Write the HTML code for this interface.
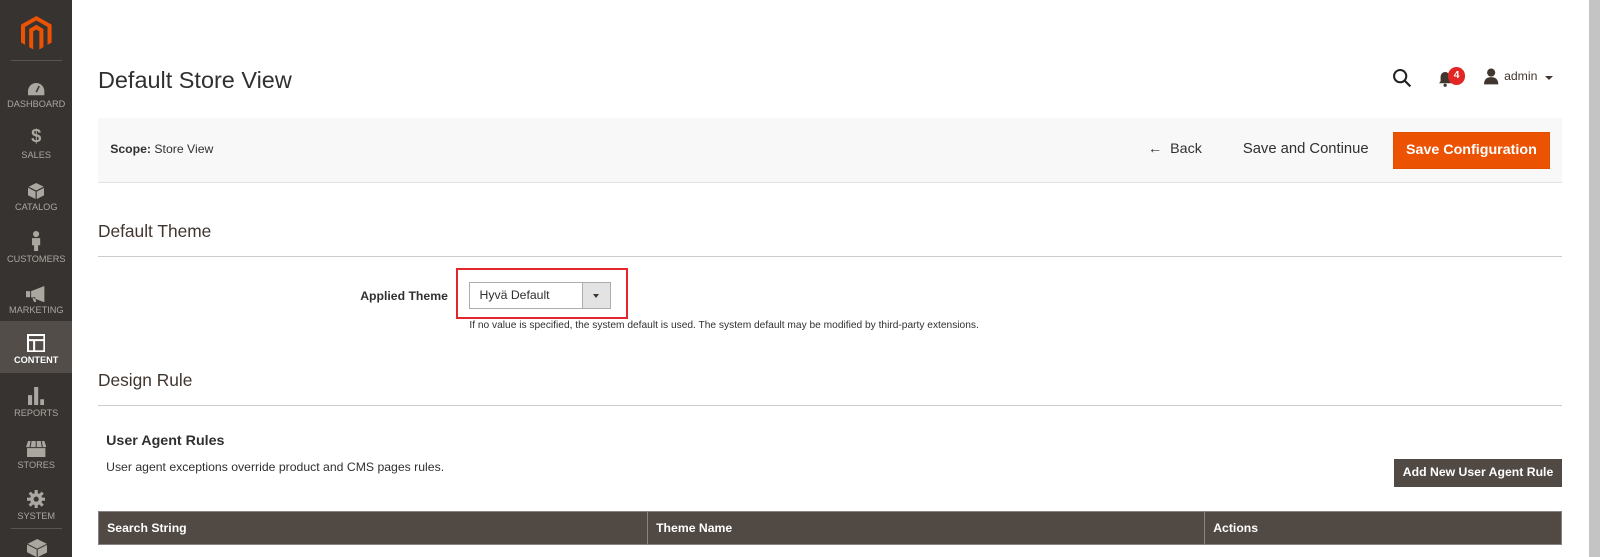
<!DOCTYPE html>
<html><head><meta charset="utf-8"><style>
*{box-sizing:border-box;margin:0;padding:0}
body{width:1600px;height:557px;overflow:hidden;background:#fff;font-family:"Liberation Sans",sans-serif;color:#303030;position:relative}
#w{position:absolute;left:0;top:0;width:1568px;height:546px;zoom:1.0204}
.side{position:absolute;left:0;top:0;width:71px;height:546px;background:#373330}
.sep{position:absolute;left:11px;width:50px;height:1px;background:#5a5551}
.it{position:absolute;left:0;width:71px;height:51px;text-align:center;color:#aaa6a0;font-size:9px}
.it .ic{height:22px;display:flex;align-items:flex-end;justify-content:center;margin-top:8px;margin-bottom:3px}
.it.act{background:#524d49;color:#fff;font-weight:bold}
.abs{position:absolute}
</style></head><body>
<div id="w">
<div class="side">
 <svg class="abs" style="left:21px;top:16px" width="30" height="34" viewBox="0 0 30 34"><path d="M15 0L30 8.5V26L26 28.3V10.7L15 4.4L4 10.7V28.3L0 26V8.5Z M15 8.6L22 12.7V30.5L18 32.8V15L15 13.3L12 15V32.8L8 30.5V12.7Z" fill="#eb5202"/></svg>
 <div class="sep" style="top:59px"></div>
 <div class="it" style="top:64px"><div class="ic"><svg width="18" height="14" viewBox="0 0 18 14"><path d="M9 1A8 8 0 0 0 1 9v4h16V9A8 8 0 0 0 9 1z" fill="#aaa6a0"/><path d="M9 10l3-6" stroke="#373330" stroke-width="1.5"/></svg></div>DASHBOARD</div>
 <div class="it" style="top:114px"><div class="ic" style="font-size:18px;font-weight:bold">$</div>SALES</div>
 <div class="it" style="top:165px"><div class="ic"><svg width="16" height="16" viewBox="0 0 16 16"><path d="M8 0L16 4V12L8 16L0 12V4Z" fill="#aaa6a0"/><path d="M0 4L8 8L16 4M8 8V16" stroke="#373330" stroke-width="1.2" fill="none"/></svg></div>CATALOG</div>
 <div class="it" style="top:216px"><div class="ic"><svg width="10" height="20" viewBox="0 0 10 20"><circle cx="5" cy="3" r="3" fill="#aaa6a0"/><path d="M1 7H9V14H7V20H3V14H1Z" fill="#aaa6a0"/></svg></div>CUSTOMERS</div>
 <div class="it" style="top:266px"><div class="ic"><svg width="20" height="16" viewBox="0 0 20 16"><path d="M0 5H4V11H0Z M5 5L18 0V16L5 11Z M6 11L8 16H10L9 11Z" fill="#aaa6a0"/></svg></div>MARKETING</div>
 <div class="it act" style="top:315px"><div class="ic"><svg width="18" height="18" viewBox="0 0 18 18"><rect x="1" y="1" width="16" height="16" fill="none" stroke="#fff" stroke-width="2"/><path d="M1 6H17M7 6V17" stroke="#fff" stroke-width="2"/></svg></div>CONTENT</div>
 <div class="it" style="top:367px"><div class="ic"><svg width="16" height="18" viewBox="0 0 16 18"><path d="M0 8H4V18H0Z M6 0H10V18H6Z M12 12H16V18H12Z" fill="#aaa6a0"/></svg></div>REPORTS</div>
 <div class="it" style="top:418px"><div class="ic"><svg width="20" height="16" viewBox="0 0 20 16"><path d="M2 0H18L20 6H0Z M1 7H19V16H1Z" fill="#aaa6a0"/><path d="M5 0L4 6M10 0V6M15 0L16 6" stroke="#373330"/></svg></div>STORES</div>
 <div class="it" style="top:468px"><div class="ic"><svg width="18" height="18" viewBox="0 0 18 18"><circle cx="9" cy="9" r="6" fill="#aaa6a0"/><path d="M9 0V18M0 9H18M2.6 2.6L15.4 15.4M15.4 2.6L2.6 15.4" stroke="#aaa6a0" stroke-width="3"/><circle cx="9" cy="9" r="2.5" fill="#373330"/></svg></div>SYSTEM</div>
 <div class="sep" style="top:517px"></div>
 <svg class="abs" style="left:26px;top:528px" width="20" height="18" viewBox="0 0 20 18"><path d="M10 0L20 5V13L10 18L0 13V5Z" fill="#aaa6a0"/><path d="M0 5L10 10L20 5M10 10V18" stroke="#373330" fill="none"/></svg>
</div>
<div class="abs" style="left:96px;top:66px;font-size:23px;color:#303030">Default Store View</div>
<svg class="abs" style="left:1364px;top:67px" width="20" height="20" viewBox="0 0 20 20"><circle cx="8" cy="8" r="6" fill="none" stroke="#222" stroke-width="2"/><path d="M12.5 12.5L18 18" stroke="#222" stroke-width="2.2"/></svg>
<svg class="abs" style="left:1408px;top:70px" width="16" height="16" viewBox="0 0 16 16"><path d="M8 1C5 1 3.5 3.5 3.5 6V10L2 12H14L12.5 10V6C12.5 3.5 11 1 8 1Z" fill="#41362f"/><circle cx="8" cy="14" r="1.6" fill="#41362f"/></svg>
<div class="abs" style="left:1419px;top:66px;width:17px;height:17px;border-radius:50%;background:#e22626;color:#fff;font-size:10px;font-weight:bold;text-align:center;line-height:17px">4</div>
<svg class="abs" style="left:1453px;top:67px" width="16" height="16" viewBox="0 0 16 16"><circle cx="8" cy="4.5" r="4" fill="#41362f"/><path d="M1 16C1 11 4 9 8 9S15 11 15 16Z" fill="#41362f"/></svg>
<div class="abs" style="left:1474px;top:68px;font-size:12px;color:#41362f">admin</div>
<div class="abs" style="left:1514px;top:74px;border:4px solid transparent;border-top:4px solid #41362f;border-bottom:0"></div>
<div class="abs" style="left:96px;top:116px;width:1435px;height:63px;background:#f8f8f8;border-bottom:1px solid #e3e3e3"></div>
<div class="abs" style="left:108px;top:139px;font-size:12px;color:#303030"><b>Scope:</b> Store View</div>
<div class="abs" style="left:1125px;top:138px;font-size:14px;color:#303030">&#8592;&nbsp; Back</div>
<div class="abs" style="left:1218px;top:138px;font-size:14.5px;color:#303030">Save and Continue</div>
<div class="abs" style="left:1365px;top:129px;width:154px;height:37px;background:#eb5202;border:1px solid #e04f00;color:#fff;font-size:14px;font-weight:bold;text-align:center;line-height:35px">Save Configuration</div>
<div class="abs" style="left:96px;top:217px;font-size:17px;color:#41362f">Default Theme</div>
<div class="abs" style="left:96px;top:251px;width:1435px;height:1px;background:#cccccc"></div>
<div class="abs" style="left:353px;top:283px;font-size:12px;font-weight:bold;color:#303030">Applied Theme</div>
<div class="abs" style="left:447px;top:263px;width:168px;height:50px;border:2px solid #e3262b"></div>
<div class="abs" style="left:460px;top:276px;width:139px;height:27px;border:1px solid #adadad;background:#fff;font-size:12px;line-height:25px;padding-left:9px;color:#303030">Hyvä Default</div>
<div class="abs" style="left:570px;top:277px;width:28px;height:25px;background:#e3e3e3;border-left:1px solid #adadad"></div>
<div class="abs" style="left:581px;top:288px;border:3px solid transparent;border-top:4px solid #41362f;border-bottom:0"></div>
<div class="abs" style="left:460px;top:314px;font-size:10px;color:#303030">If no value is specified, the system default is used. The system default may be modified by third-party extensions.</div>
<div class="abs" style="left:96px;top:363px;font-size:17px;color:#41362f">Design Rule</div>
<div class="abs" style="left:96px;top:397px;width:1435px;height:1px;background:#cccccc"></div>
<div class="abs" style="left:104px;top:424px;font-size:14px;font-weight:bold;color:#303030">User Agent Rules</div>
<div class="abs" style="left:104px;top:451px;font-size:12px;color:#303030">User agent exceptions override product and CMS pages rules.</div>
<div class="abs" style="left:1366px;top:450px;width:165px;height:27px;background:#514943;color:#fff;font-size:12px;font-weight:bold;text-align:center;line-height:27px">Add New User Agent Rule</div>
<div class="abs" style="left:96px;top:501px;width:1435px;height:33px;background:#514943;border:1px solid #8a837f;color:#fff;font-size:12px;font-weight:bold">
 <div class="abs" style="left:8px;top:9px">Search String</div>
 <div class="abs" style="left:537px;top:0;height:31px;width:1px;background:#8a837f"></div>
 <div class="abs" style="left:546px;top:9px">Theme Name</div>
 <div class="abs" style="left:1083px;top:0;height:31px;width:1px;background:#8a837f"></div>
 <div class="abs" style="left:1092px;top:9px">Actions</div>
</div>
</div>
<div class="abs" style="left:1589px;top:0;width:11px;height:557px;background:#c4c4c4"></div>
</body></html>
